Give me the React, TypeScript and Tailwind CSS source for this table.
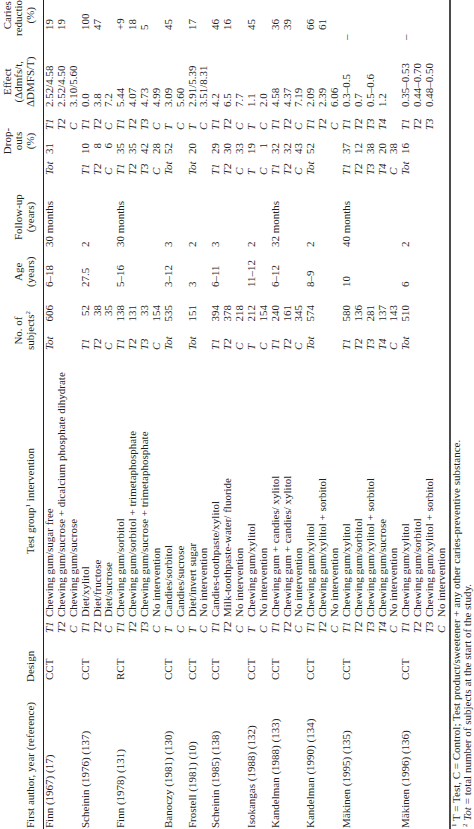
type Row = {
  g: string;
  t: string;
  sL?: string;
  sN?: string;
  age?: string;
  fu?: string;
  dL?: string;
  dN?: string;
  eL?: string;
  eV?: string;
  cr?: string;
};

type Study = { author: string; design: string; rows: Row[] };

const studies: Study[] = [
  {
    author: "Finn (1967) (17)",
    design: "CCT",
    rows: [
      { g: "T1", t: "Chewing gum/sugar free", sL: "Tot", sN: "606", age: "6–18", fu: "30 months", dL: "Tot", dN: "31", eL: "T1", eV: "2.52/4.58", cr: "19" },
      { g: "T2", t: "Chewing gum/sucrose + dicalcium phosphate dihydrate", eL: "T2", eV: "2.52/4.50", cr: "19" },
      { g: "C", t: "Chewing gum/sucrose", eL: "C", eV: "3.10/5.60" },
    ],
  },
  {
    author: "Scheinin (1976) (137)",
    design: "CCT",
    rows: [
      { g: "T1", t: "Diet/xylitol", sL: "T1", sN: "52", age: "27.5", fu: "2", dL: "T1", dN: "10", eL: "T1", eV: "0.0", cr: "100" },
      { g: "T2", t: "Diet/fructose", sL: "T2", sN: "38", dL: "T2", dN: "8", eL: "T2", eV: "3.8", cr: "47" },
      { g: "C", t: "Diet/sucrose", sL: "C", sN: "35", dL: "C", dN: "6", eL: "C", eV: "7.2" },
    ],
  },
  {
    author: "Finn (1978) (131)",
    design: "RCT",
    rows: [
      { g: "T1", t: "Chewing gum/sorbitol", sL: "T1", sN: "138", age: "5–16", fu: "30 months", dL: "T1", dN: "35", eL: "T1", eV: "5.44", cr: "+9" },
      { g: "T2", t: "Chewing gum/sorbitol + trimetaphosphate", sL: "T2", sN: "131", dL: "T2", dN: "35", eL: "T2", eV: "4.07", cr: "18" },
      { g: "T3", t: "Chewing gum/sucrose + trimetaphosphate", sL: "T3", sN: "33", dL: "T3", dN: "42", eL: "T3", eV: "4.73", cr: "5" },
      { g: "C", t: "No intervention", sL: "C", sN: "154", dL: "C", dN: "28", eL: "C", eV: "4.99" },
    ],
  },
  {
    author: "Banoczy (1981) (130)",
    design: "CCT",
    rows: [
      { g: "T", t: "Candies/sorbitol", sL: "Tot", sN: "535", age: "3–12", fu: "3", dL: "Tot", dN: "52", eL: "T", eV: "3.09", cr: "45" },
      { g: "C", t: "Candies/sucrose", eL: "C", eV: "5.60" },
    ],
  },
  {
    author: "Frostell (1981) (10)",
    design: "CCT",
    rows: [
      { g: "T", t: "Diet/invert sugar", sL: "Tot", sN: "151", age: "3", fu: "2", dL: "Tot", dN: "20", eL: "T", eV: "2.91/5.39", cr: "17" },
      { g: "C", t: "No intervention", eL: "C", eV: "3.51/8.31" },
    ],
  },
  {
    author: "Scheinin (1985) (138)",
    design: "CCT",
    rows: [
      { g: "T1", t: "Candies-toothpaste/xylitol", sL: "T1", sN: "394", age: "6–11", fu: "3", dL: "T1", dN: "29", eL: "T1", eV: "4.2", cr: "46" },
      { g: "T2", t: "Milk-toothpaste-water/ fluoride", sL: "T2", sN: "378", dL: "T2", dN: "30", eL: "T2", eV: "6.5", cr: "16" },
      { g: "C", t: "No intervention", sL: "C", sN: "218", dL: "C", dN: "33", eL: "C", eV: "7.7" },
    ],
  },
  {
    author: "Isokangas (1988) (132)",
    design: "CCT",
    rows: [
      { g: "T", t: "Chewing gum/xylitol", sL: "T", sN: "212", age: "11–12", fu: "2", dL: "T", dN: "19", eL: "T", eV: "1.1", cr: "45" },
      { g: "C", t: "No intervention", sL: "C", sN: "154", dL: "C", dN: "1", eL: "C", eV: "2.0" },
    ],
  },
  {
    author: "Kandelman (1988) (133)",
    design: "CCT",
    rows: [
      { g: "T1", t: "Chewing gum + candies/ xylitol", sL: "T1", sN: "240", age: "6–12", fu: "32 months", dL: "T1", dN: "32", eL: "T1", eV: "4.58", cr: "36" },
      { g: "T2", t: "Chewing gum + candies/ xylitol", sL: "T2", sN: "161", dL: "T2", dN: "32", eL: "T2", eV: "4.37", cr: "39" },
      { g: "C", t: "No intervention", sL: "C", sN: "345", dL: "C", dN: "43", eL: "C", eV: "7.19" },
    ],
  },
  {
    author: "Kandelman (1990) (134)",
    design: "CCT",
    rows: [
      { g: "T1", t: "Chewing gum/xylitol", sL: "Tot", sN: "574", age: "8–9", fu: "2", dL: "Tot", dN: "52", eL: "T1", eV: "2.09", cr: "66" },
      { g: "T2", t: "Chewing gum/xylitol + sorbitol", eL: "T2", eV: "2.39", cr: "61" },
      { g: "C", t: "No intervention", eL: "C", eV: "6.06" },
    ],
  },
  {
    author: "Mäkinen (1995) (135)",
    design: "CCT",
    rows: [
      { g: "T1", t: "Chewing gum/xylitol", sL: "T1", sN: "580", age: "10", fu: "40 months", dL: "T1", dN: "37", eL: "T1", eV: "0.3–0.5", cr: "–" },
      { g: "T2", t: "Chewing gum/sorbitol", sL: "T2", sN: "136", dL: "T2", dN: "12", eL: "T2", eV: "0.7" },
      { g: "T3", t: "Chewing gum/xylitol + sorbitol", sL: "T3", sN: "281", dL: "T3", dN: "38", eL: "T3", eV: "0.5–0.6" },
      { g: "T4", t: "Chewing gum/sucrose", sL: "T4", sN: "137", dL: "T4", dN: "20", eL: "T4", eV: "1.2" },
      { g: "C", t: "No intervention", sL: "C", sN: "143", dL: "C", dN: "38" },
    ],
  },
  {
    author: "Mäkinen (1996) (136)",
    design: "CCT",
    rows: [
      { g: "T1", t: "Chewing gum/xylitol", sL: "Tot", sN: "510", age: "6", fu: "2", dL: "Tot", dN: "16", eL: "T1", eV: "0.35–0.53", cr: "–" },
      { g: "T2", t: "Chewing gum/sorbitol", eL: "T2", eV: "0.44–0.70" },
      { g: "T3", t: "Chewing gum/xylitol + sorbitol", eL: "T3", eV: "0.48–0.50" },
      { g: "C", t: "No intervention" },
    ],
  },
];

// column template shared by header and body (unrotated px)
const cols =
  "grid grid-cols-[147px_49px_16px_267px_15px_30px_58px_72px_14px_18px_36px_77px_41px]";

function Lines({ lines }: { lines: React.ReactNode[] }) {
  return (
    <div className="inline-flex flex-col items-center leading-[11.5px]">
      {lines.map((l, i) => (
        <span key={i}>{l}</span>
      ))}
    </div>
  );
}

export default function App() {
  return (
    <div className="relative h-[829px] w-[474px] overflow-hidden bg-white">
      <div className="h-[474px] w-[840px] origin-top-left -rotate-90 translate-y-[829px] font-['Liberation_Serif',serif] text-[11px] text-[#1f1f1f] whitespace-nowrap">
        {/* header */}
        <div className={`${cols} h-[44px] items-end border-b-[1.5px] border-[#1f1f1f] pb-[7px] leading-[11.5px]`}>
          <div className="pl-px">First author, year (reference)</div>
          <div>Design</div>
          <div className="col-span-2 pl-[79px]">
            Test group<sup className="text-[7px]">1</sup> intervention
          </div>
          <div className="col-span-2">
            <Lines lines={["No. of", <>subjects<sup className="text-[7px]">2</sup></>]} />
          </div>
          <div className="pl-[18px]">
            <Lines lines={["Age", "(years)"]} />
          </div>
          <div className="pl-[7px]">
            <Lines lines={["Follow-up", "(years)"]} />
          </div>
          <div className="col-span-3 flex justify-center">
            <Lines lines={["Drop-", "outs", "(%)"]} />
          </div>
          <div>
            <Lines lines={["Effect", "(Δdmfs/t,", "ΔDMFS/T)"]} />
          </div>
          <div className="-ml-[6px]">
            <Lines lines={["Caries", "reduction", "(%)"]} />
          </div>
        </div>

        {/* body */}
        <div className={`${cols} auto-rows-[11.88px] leading-[11.88px]`}>
          {studies.map((s) =>
            s.rows.map((r, i) => (
              <div key={s.author + i} className="contents">
                <div className="pl-px">{i === 0 ? s.author : ""}</div>
                <div className="pl-[2px]">{i === 0 ? s.design : ""}</div>
                <div className="italic">{r.g}</div>
                <div>{r.t}</div>
                <div className="italic">{r.sL}</div>
                <div className="text-right">{r.sN}</div>
                <div className="pl-[18px]">{r.age}</div>
                <div>{r.fu}</div>
                <div className="italic">{r.dL}</div>
                <div className="text-right">{r.dN}</div>
                <div className="pl-[13px] italic">{r.eL}</div>
                <div>{r.eV}</div>
                <div className={r.cr === "–" ? "-ml-[10px]" : ""}>{r.cr}</div>
              </div>
            ))
          )}
        </div>

        <div className="mt-px h-[2px] bg-[#4a4a4a]" />

        {/* footnotes */}
        <div className="pl-[2px] leading-[11px]">
          <div>
            <sup className="text-[7px]">1</sup> T = Test, C = Control; Test product/sweetener + any other caries-preventive substance.
          </div>
          <div>
            <sup className="text-[7px]">2</sup> <span className="italic">Tot</span> = total number of subjects at the start of the study.
          </div>
        </div>
      </div>
    </div>
  );
}
